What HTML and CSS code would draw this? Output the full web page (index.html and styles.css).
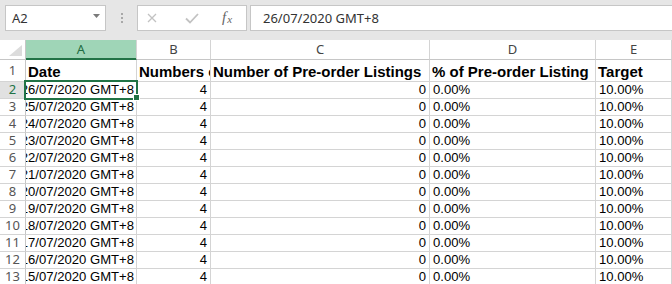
FILE: index.html
```html
<!DOCTYPE html>
<html>
<head>
<meta charset="utf-8">
<link rel="stylesheet" href="styles.css">
</head>
<body>
<div class="app">
  <div class="toolbar">
    <div class="namebox">
      <span class="name">A2</span>
      <svg class="caret" width="7" height="4" viewBox="0 0 7 4"><polygon points="0,0 7,0 3.5,4" fill="#7a7a7a"/></svg>
    </div>
    <div class="grip"><i></i><i></i><i></i></div>
    <div class="fbuttons">
      <svg class="btn-x" width="10" height="10" viewBox="0 0 10 10"><path d="M1 1 L9 9 M9 1 L1 9" stroke="#c2c2c2" stroke-width="1.3" fill="none"/></svg>
      <svg class="btn-check" width="14" height="11" viewBox="0 0 14 11"><path d="M1 5.5 L5 9.5 L13 1" stroke="#c2c2c2" stroke-width="1.8" fill="none"/></svg>
      <span class="fx">f<span class="fx-x">x</span></span>
    </div>
    <div class="fbar">26/07/2020 GMT+8</div>
  </div>
  <div class="sheet">
    <div class="cell corner"><svg width="13" height="11" viewBox="0 0 13 11"><polygon points="13,0 13,11 0,11" fill="#dcdcdc"/></svg></div>
    <div class="cell colhead selcol">A</div>
    <div class="cell colhead">B</div>
    <div class="cell colhead">C</div>
    <div class="cell colhead">D</div>
    <div class="cell colhead">E</div>

    <div class="cell rowhead">1</div>
    <div class="cell bold">Date</div>
    <div class="cell bold">Numbers of Listings</div>
    <div class="cell bold">Number of Pre-order Listings</div>
    <div class="cell bold">% of Pre-order Listing</div>
    <div class="cell bold">Target</div>

    <div class="cell rowhead selrow">2</div>
    <div class="cell date"><span>26/07/2020 GMT+8</span></div>
    <div class="cell num">4</div>
    <div class="cell num">0</div>
    <div class="cell">0.00%</div>
    <div class="cell">10.00%</div>

    <div class="cell rowhead">3</div>
    <div class="cell date"><span>25/07/2020 GMT+8</span></div>
    <div class="cell num">4</div>
    <div class="cell num">0</div>
    <div class="cell">0.00%</div>
    <div class="cell">10.00%</div>

    <div class="cell rowhead">4</div>
    <div class="cell date"><span>24/07/2020 GMT+8</span></div>
    <div class="cell num">4</div>
    <div class="cell num">0</div>
    <div class="cell">0.00%</div>
    <div class="cell">10.00%</div>

    <div class="cell rowhead">5</div>
    <div class="cell date"><span>23/07/2020 GMT+8</span></div>
    <div class="cell num">4</div>
    <div class="cell num">0</div>
    <div class="cell">0.00%</div>
    <div class="cell">10.00%</div>

    <div class="cell rowhead">6</div>
    <div class="cell date"><span>22/07/2020 GMT+8</span></div>
    <div class="cell num">4</div>
    <div class="cell num">0</div>
    <div class="cell">0.00%</div>
    <div class="cell">10.00%</div>

    <div class="cell rowhead">7</div>
    <div class="cell date"><span>21/07/2020 GMT+8</span></div>
    <div class="cell num">4</div>
    <div class="cell num">0</div>
    <div class="cell">0.00%</div>
    <div class="cell">10.00%</div>

    <div class="cell rowhead">8</div>
    <div class="cell date"><span>20/07/2020 GMT+8</span></div>
    <div class="cell num">4</div>
    <div class="cell num">0</div>
    <div class="cell">0.00%</div>
    <div class="cell">10.00%</div>

    <div class="cell rowhead">9</div>
    <div class="cell date"><span>19/07/2020 GMT+8</span></div>
    <div class="cell num">4</div>
    <div class="cell num">0</div>
    <div class="cell">0.00%</div>
    <div class="cell">10.00%</div>

    <div class="cell rowhead">10</div>
    <div class="cell date"><span>18/07/2020 GMT+8</span></div>
    <div class="cell num">4</div>
    <div class="cell num">0</div>
    <div class="cell">0.00%</div>
    <div class="cell">10.00%</div>

    <div class="cell rowhead">11</div>
    <div class="cell date"><span>17/07/2020 GMT+8</span></div>
    <div class="cell num">4</div>
    <div class="cell num">0</div>
    <div class="cell">0.00%</div>
    <div class="cell">10.00%</div>

    <div class="cell rowhead">12</div>
    <div class="cell date"><span>16/07/2020 GMT+8</span></div>
    <div class="cell num">4</div>
    <div class="cell num">0</div>
    <div class="cell">0.00%</div>
    <div class="cell">10.00%</div>

    <div class="cell rowhead">13</div>
    <div class="cell date"><span>15/07/2020 GMT+8</span></div>
    <div class="cell num">4</div>
    <div class="cell num">0</div>
    <div class="cell">0.00%</div>
    <div class="cell">10.00%</div>

    <div class="selection"><div class="handle"></div></div>
  </div>
</div>
</body>
</html>
```

FILE: styles.css
```css
* { box-sizing: border-box; }
html, body { margin: 0; padding: 0; background: #ffffff; }
.app {
  width: 672px;
  height: 284px;
  overflow: hidden;
  font-family: "Liberation Sans", Arial, sans-serif;
}

/* formula bar row */
.toolbar {
  height: 40px;
  background: #e6e6e6;
  display: flex;
  align-items: flex-start;
  padding: 5px 0 0 5px;
}
.namebox {
  width: 101px;
  height: 26px;
  background: #fff;
  border: 1px solid #c6c6c6;
  display: flex;
  align-items: center;
  justify-content: space-between;
  padding: 0 5px 1px 6px;
  font-family: "Noto Sans", "Open Sans", sans-serif;
  font-size: 13px;
  color: #333;
}
.caret { margin-top: -4px; }
.grip {
  width: 31px;
  height: 26px;
  display: flex;
  flex-direction: column;
  align-items: center;
  justify-content: center;
  gap: 2px;
  padding-left: 1px;
}
.grip i {
  display: block;
  width: 2px;
  height: 2px;
  background: #a8a8a8;
}
.fbuttons {
  width: 110px;
  height: 26px;
  background: #fff;
  border: 1px solid #c6c6c6;
  display: flex;
  align-items: center;
  padding-left: 9px;
}
.btn-check { margin-left: 28px; }
.fx {
  margin-left: 23px;
  font-family: "Liberation Serif", "Times New Roman", serif;
  font-style: italic;
  font-size: 15px;
  color: #666;
  line-height: 1;
  margin-top: -2px;
}
.fx-x { font-size: 11px; position: relative; top: 1px; margin-left: 1px; }
.fbar {
  flex: 1;
  height: 26px;
  margin-left: 3px;
  margin-right: -2px;
  background: #fff;
  border: 1px solid #c6c6c6;
  display: flex;
  align-items: center;
  padding: 0 0 1px 12px;
  font-family: "Noto Sans", "Open Sans", sans-serif;
  font-size: 13px;
  color: #333;
}

/* grid */
.sheet {
  position: relative;
  display: grid;
  grid-template-columns: 26px 111px 74px 219px 166px 76px;
  grid-template-rows: 20px 22px repeat(12, 17px);
}
.cell {
  border-right: 1px solid #d4d4d4;
  border-bottom: 1px solid #d4d4d4;
  overflow: hidden;
  white-space: nowrap;
  display: flex;
  align-items: flex-end;
  padding: 0 3px 1px 3px;
  font-size: 13.1px;
  line-height: 15px;
  color: #000;
}
.cell.bold {
  font-weight: bold;
  font-size: 15px;
  line-height: 17px;
  padding-left: 2px;
}
.cell.num { justify-content: flex-end; padding-right: 3px; }
.cell.date { justify-content: flex-end; padding-right: 2px; }
.cell.date span { flex-shrink: 0; }

.corner {
  justify-content: flex-end;
  align-items: flex-end;
  padding: 0 3px 3px 0;
  border-right-color: #c6c6c6;
  border-bottom-color: #c6c6c6;
}
.corner svg { display: block; }
.colhead {
  justify-content: center;
  align-items: center;
  padding: 0;
  font-family: "Noto Sans", "Open Sans", sans-serif;
  font-size: 13px;
  line-height: 1;
  color: #444;
  border-bottom-color: #c6c6c6;
}
.colhead.selcol {
  background: #9fd5b7;
  color: #1e6b41;
  border-bottom-color: #217346;
  box-shadow: inset 0 -1px 0 #217346;
}
.rowhead {
  justify-content: center;
  align-items: center;
  padding: 0 0 1px 0;
  font-family: "Noto Sans", "Open Sans", sans-serif;
  font-size: 13px;
  line-height: 1;
  color: #555;
  border-right-color: #c6c6c6;
}
.rowhead.selrow {
  background: #e1e1e1;
  color: #217346;
}

.selection {
  position: absolute;
  left: 24px;
  top: 40px;
  width: 114px;
  height: 20px;
  border: 2px solid #217346;
  pointer-events: none;
}
.handle {
  position: absolute;
  right: -4px;
  bottom: -3px;
  width: 7px;
  height: 7px;
  background: #217346;
  border: 1px solid #fff;
}
```
